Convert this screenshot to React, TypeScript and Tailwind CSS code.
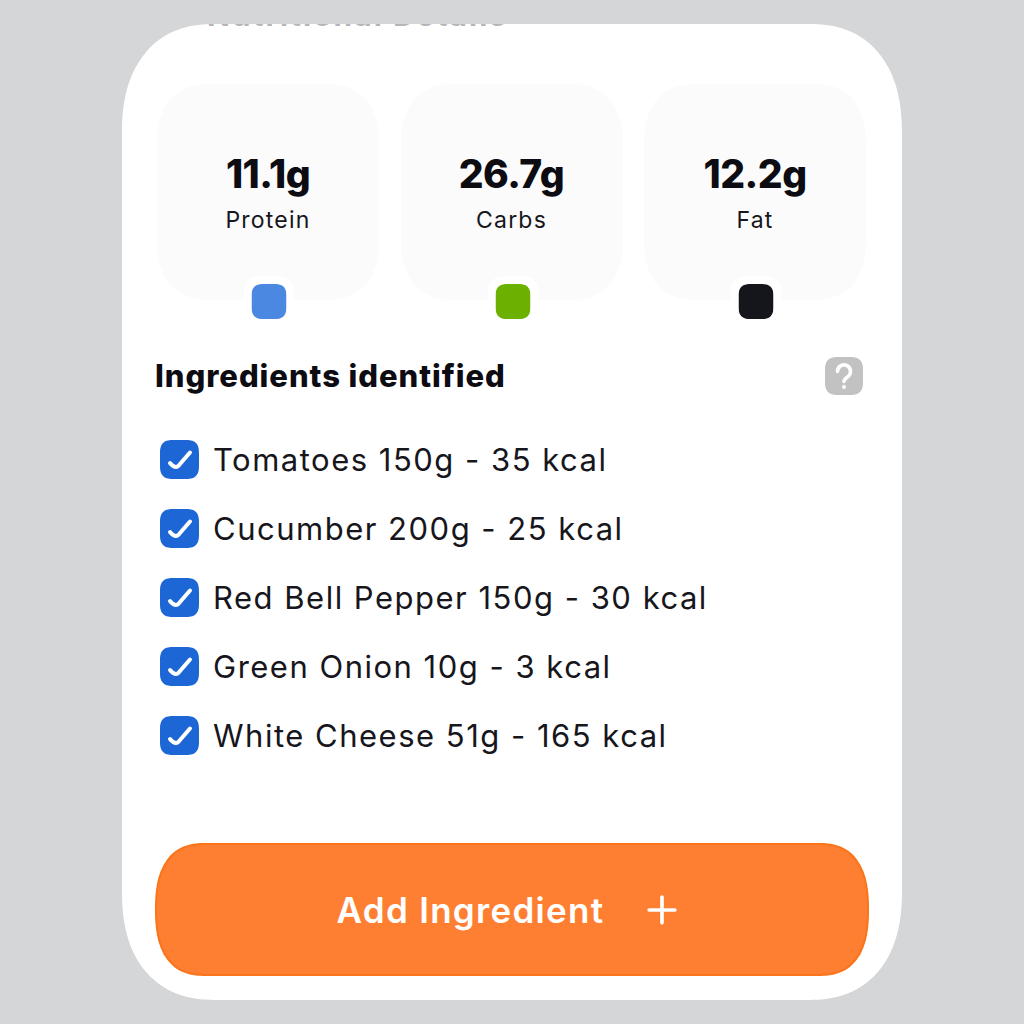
import React from "react";
import { Plus } from "lucide-react";

const macros = [
  { value: "11.1g", label: "Protein", color: "bg-[#4a88e2]" },
  { value: "26.7g", label: "Carbs", color: "bg-[#6cb000]" },
  { value: "12.2g", label: "Fat", color: "bg-[#15151c]" },
];

const ingredients = [
  "Tomatoes 150g - 35 kcal",
  "Cucumber 200g - 25 kcal",
  "Red Bell Pepper 150g - 30 kcal",
  "Green Onion 10g - 3 kcal",
  "White Cheese 51g - 165 kcal",
];

function MacroCard({ value, label, color }: { value: string; label: string; color: string }) {
  return (
    <div className="relative flex h-[216px] w-[222px] flex-col items-center rounded-[54px/62px] bg-[#fbfbfb] pt-[68px] [corner-shape:superellipse(1.3)]">
      <div className="text-[39px] leading-[44px] font-extrabold tracking-[-0.5px] text-[#0c0c12]">{value}</div>
      <div className="mt-[11px] text-[23px] leading-[26px] tracking-[1.2px] text-[#16161c]">{label}</div>
      <div className="absolute top-[192px] left-[calc(50%+1px)] -translate-x-1/2 rounded-[20px] bg-white p-[8px] [corner-shape:superellipse(1.4)]">
        <div className={`h-[35px] w-[35px] rounded-[13px] ${color} [corner-shape:superellipse(1.5)]`} />
      </div>
    </div>
  );
}

export default function App() {
  return (
    <div className="flex h-[1024px] w-full items-center justify-center bg-[#d5d6d8] font-['Inter',sans-serif]">
      <div className="flex h-[976px] w-[780px] flex-col rounded-[92px/108px] bg-white pr-[34px] pl-[33px] [corner-shape:superellipse(1.2)]">
        {/* heading scrolled away, only the bottom of its letters peeks out */}
        <div className="h-[60px] overflow-hidden">
          <div className="-mt-[24px] pl-[52px] text-[30px] leading-[30px] font-bold tracking-[2px] text-[#b5b5b8]">
            Nutritional Details
          </div>
        </div>
        <div className="flex gap-[21.5px] pl-[2px]">
          {macros.map((m) => (
            <MacroCard key={m.label} {...m} />
          ))}
        </div>
        <div className="mt-[56px] flex items-center justify-between pr-[5px]">
          <h2 className="text-[31px] leading-[40px] font-extrabold tracking-[0.95px] text-[#0c0c12]">Ingredients identified</h2>
          <div className="flex h-[38px] w-[38px] items-center justify-center rounded-[14px] bg-[#c2c2c2] [corner-shape:superellipse(1.5)]">
            <svg width="38" height="38" viewBox="0 0 38 38" fill="none" stroke="white" strokeWidth="3.6" strokeLinecap="round">
              <path d="M12.5 14.5a6.5 6.5 0 1 1 10 5.4c-2 1.3-3.5 2.3-3.5 4.6" />
              <circle cx="19" cy="30" r="1.2" fill="white" strokeWidth="1.6" />
            </svg>
          </div>
        </div>
        <ul className="mt-[43px] flex flex-col gap-[29px] pl-[5px]">
          {ingredients.map((item) => (
            <li key={item} className="flex h-[40px] items-center gap-[14px]">
              <span className="flex h-[39px] w-[39px] items-center justify-center rounded-[14px] bg-[#1c66d6] [corner-shape:superellipse(1.5)]">
                <svg width="39" height="39" viewBox="0 0 39 39" fill="none" stroke="white" strokeWidth="4" strokeLinecap="round" strokeLinejoin="round">
                  <path d="M10 23Q13 27 16 27Q18 27 20 24L30 12.5" />
                </svg>
              </span>
              <span className="pt-[1px] text-[31px] leading-[40px] tracking-[1.5px] text-[#16161c]">{item}</span>
            </li>
          ))}
        </ul>
        <button className="mt-[88px] flex h-[133px] w-[714px] items-center justify-center gap-[36px] rounded-[50px/66px] border-2 border-[#fb7419] bg-[#ff7f32] pr-[3px] text-white [corner-shape:superellipse(1.3)]">
          <span className="text-[35px] leading-[40px] font-semibold tracking-[1.3px]">Add Ingredient</span>
          <Plus size={44} strokeWidth={2} />
        </button>
      </div>
    </div>
  );
}
